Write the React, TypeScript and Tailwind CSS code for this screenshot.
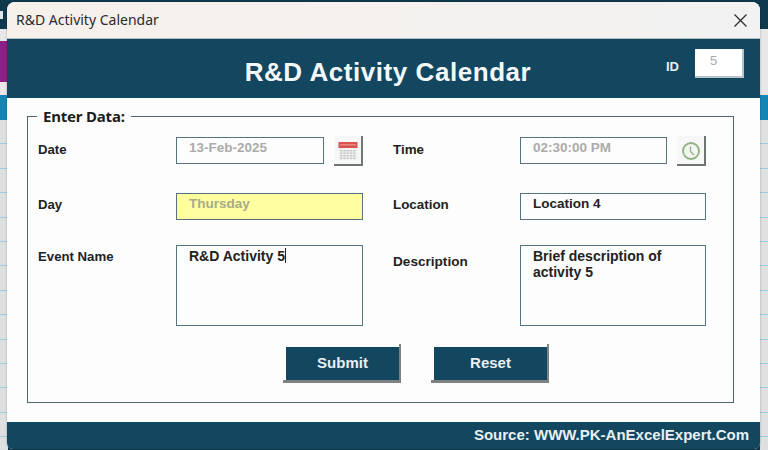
import React from "react";

const sans = "font-['Liberation_Sans',Arial,sans-serif]";

function CalendarIcon() {
  return (
    <svg width="20" height="20" viewBox="0 0 20 20" aria-hidden="true">
      <rect x="0.5" y="1" width="19" height="18" fill="#f4f2f2" />
      <rect x="0.5" y="1" width="19" height="6" fill="#d9534f" />
      <rect x="2" y="3" width="16" height="1.5" fill="#e98a86" />
      {[9, 11.5, 14, 16.5].map((y) =>
        [2, 5.3, 8.6, 11.9, 15.2].map((x) => (
          <rect key={`${x}-${y}`} x={x} y={y} width="2.4" height="1.4" fill="#bfc3c8" />
        ))
      )}
    </svg>
  );
}

function ClockIcon() {
  return (
    <svg width="20" height="20" viewBox="0 0 20 20" fill="none" aria-hidden="true">
      <circle cx="10" cy="10" r="8" fill="#f1f7ec" stroke="#8fb184" strokeWidth="1.8" />
      <path d="M9.5 5.5V10.5L13 14" stroke="#9aa89a" strokeWidth="1.3" />
    </svg>
  );
}

function IconButton({ children }: { children: React.ReactNode }) {
  return (
    <div className="w-[29px] h-[30px] -mt-[1px] pt-[1px] flex items-center justify-center bg-[#f7f7f7] border-r-2 border-b-2 border-[#6f7476] shrink-0">
      {children}
    </div>
  );
}

function Label({ children, className = "" }: { children: React.ReactNode; className?: string }) {
  return <div className={`leading-[16px] font-bold text-[#222] ${className}`}>{children}</div>;
}

function Field({ children, className = "" }: { children: React.ReactNode; className?: string }) {
  return (
    <div className={`border border-[#567480] pl-[12px] pr-2 font-bold ${className}`}>
      {children}
    </div>
  );
}

function ActionButton({ children, className = "" }: { children: React.ReactNode; className?: string }) {
  return (
    <div className={`h-[39px] pl-[3px] pt-[3px] border-r-[2px] border-b-[3px] border-[#7d8283] ${className}`}>
      <div className="h-full bg-[#12475f] flex items-center justify-center text-[15px] font-bold text-[#e8f0f3]">
        {children}
      </div>
    </div>
  );
}

function SideStrip({ magenta }: { magenta?: boolean }) {
  return (
    <div className="w-[8px] flex flex-col overflow-hidden">
      <div className="h-[29px] bg-[#0f3a4e] pt-[11px]">
        {magenta && <div className="w-[3px] h-[8px] bg-[#dfe7ea]" />}
      </div>
      <div className="h-[66px] bg-[#e9e6e8] pt-[12px]">
        {magenta && <div className="h-[41px] bg-[#8e1f86]" />}
      </div>
      <div className="h-[25px] bg-[#1584b4]" />
      <div
        className="flex-1 bg-[#dedfe1]"
        style={{
          backgroundImage: "repeating-linear-gradient(to bottom, transparent 0 23.4px, #9dcbe0 23.4px 24.4px)",
        }}
      />
    </div>
  );
}

export default function App() {
  return (
    <div className={`relative w-[768px] h-[450px] overflow-hidden bg-[#0f3a4e] ${sans}`}>
      {/* spreadsheet behind the dialog */}
      <div className="h-[450px] flex justify-between">
        <SideStrip magenta />
        <SideStrip />
      </div>

      {/* dialog window */}
      <div className="absolute left-[7px] top-[2px] w-[753px] h-[447px] rounded-t-[8px] rounded-b-[6px] overflow-hidden bg-[#fdfdfd] flex flex-col shadow-[0_0_2px_rgba(0,0,0,0.35)]">
        <div className="h-[37px] shrink-0 bg-gradient-to-r from-[#f6f0eb] to-[#f2f2f2] flex items-center justify-between pl-[9px] pr-[12px] border-b border-[#aebcc4]">
          <span className="text-[14px] text-[#2b2b2b] font-['Noto_Sans',sans-serif] leading-[20px]">R&amp;D Activity Calendar</span>
          <svg width="15" height="15" viewBox="0 0 15 15" fill="none" stroke="#333" strokeWidth="1.4" aria-hidden="true">
            <path d="M1.5 1.5L13.5 13.5M13.5 1.5L1.5 13.5" />
          </svg>
        </div>

        <div className="h-[59px] shrink-0 bg-[#12475f] relative flex items-center justify-center pt-[7px] pl-[9px]">
          <h1 className="text-[26px] font-bold text-[#f4f8fa] tracking-[0.55px]">R&amp;D Activity Calendar</h1>
          <div className="absolute right-[16px] top-[10px] flex items-center gap-[16px]">
            <span className="text-[13px] font-bold text-[#e4edf0] mt-[7px]">ID</span>
            <div className="w-[49px] h-[29px] bg-white border-r-2 border-b-2 border-[#b8c4ca] pl-[15px] pt-[2px] text-[13px] text-[#a8a8a8]">5</div>
          </div>
        </div>

        <div className="flex-1 pl-[20px] pr-[26px] pt-[18px] pb-[19px]">
          <div className="relative h-full border border-[#4f6670] pt-[20px] pl-[10px]">
            <div className="absolute left-[9px] top-[-10px] bg-[#fdfdfd] px-[6px] text-[15px] leading-[18px] font-bold tracking-[-0.2px] text-[#1d1d1d] font-['Noto_Sans',sans-serif]">
              Enter Data:
            </div>

            <div className="grid grid-cols-[138px_187px_157px_186px] w-[668px] grid-rows-[31px_27px_81px] gap-y-[25px] text-[13.2px]">
              <Label className="pt-[5px]">Date</Label>
              <div className="flex gap-[10px]">
                <Field className="w-[148px] h-[27px] pt-[2px] leading-[15px] text-[13.5px] text-[#ababab]">13-Feb-2025</Field>
                <IconButton><CalendarIcon /></IconButton>
              </div>
              <Label className="pl-[30px] pt-[5px] text-[13.4px]">Time</Label>
              <div className="flex gap-[10px]">
                <Field className="w-[147px] h-[27px] pt-[2px] leading-[15px] text-[13.5px] text-[#ababab]">02:30:00 PM</Field>
                <IconButton><ClockIcon /></IconButton>
              </div>

              <Label className="pt-[4px]">Day</Label>
              <Field className="h-[27px] pt-[2px] leading-[15px] text-[13.5px] bg-[#ffff9f] text-[#a9a98a]">Thursday</Field>
              <Label className="pl-[30px] pt-[4px] text-[13.4px]">Location</Label>
              <Field className="h-[27px] pt-[2px] leading-[15px] text-[13.5px] text-[#222]">Location 4</Field>

              <Label className="pt-[4px]">Event Name</Label>
              <Field className="h-[81px] pt-[2px] leading-[16px] text-[14px] text-[#222]">
                R&amp;D Activity 5<span className="inline-block w-px h-[15px] bg-[#222] align-[-2px]" />
              </Field>
              <Label className="pl-[30px] pt-[9px] text-[13.6px]">Description</Label>
              <Field className="h-[81px] pt-[2px] leading-[16px] text-[14px] text-[#222]">Brief description of activity 5</Field>
            </div>

            <div className="flex pl-[245px] gap-[30px] mt-[18px]">
              <ActionButton className="w-[118px]">Submit</ActionButton>
              <ActionButton className="w-[118px]">Reset</ActionButton>
            </div>
          </div>
        </div>

        <div className="h-[27px] shrink-0 bg-[#12475f] flex items-center justify-end pr-[11px] text-[15px] font-bold text-[#e8f0f3]">
          Source: WWW.PK-AnExcelExpert.Com
        </div>
      </div>
    </div>
  );
}
